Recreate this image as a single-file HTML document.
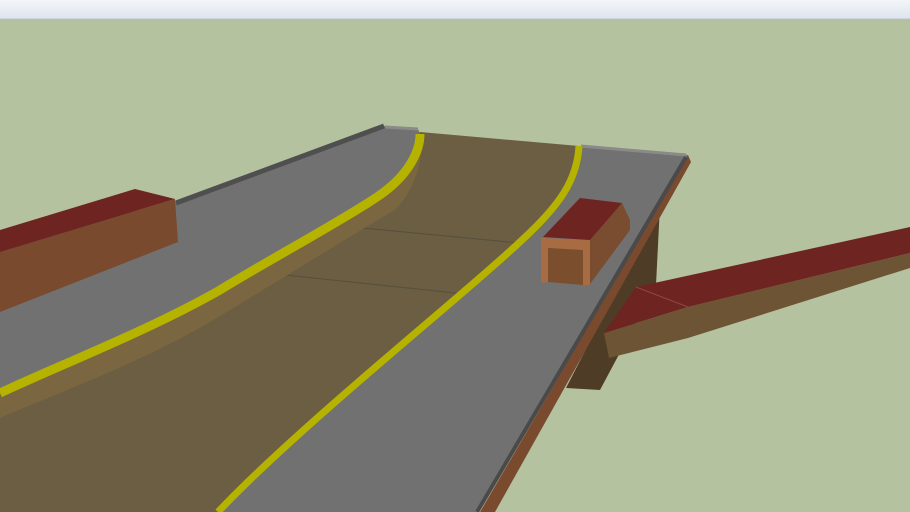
<!DOCTYPE html>
<html><head><meta charset="utf-8"><style>
html,body{margin:0;padding:0;width:910px;height:512px;overflow:hidden;background:#b5c2a0}
.top{position:absolute;left:0;top:0;width:910px;height:18px;background:linear-gradient(#f3f5f8,#dfe5ee);border-bottom:1px solid #cfd6df}
svg{position:absolute;left:0;top:0}
</style></head><body>
<div class="top"></div>
<svg width="910" height="512" viewBox="0 0 910 512">
<polygon points="660,205 656,285 600,390 566,388" fill="#4e3c26"/>
<polygon points="420,132 579,146 600,160 240,512 0,512 0,380" fill="#6b5e42"/>
<line x1="362" y1="228" x2="520" y2="243" stroke="#55503e" stroke-width="1"/>
<line x1="285" y1="275" x2="465" y2="294" stroke="#55503e" stroke-width="1"/>
<path d="M420,134 C420,150 410,175 377,197 C340,222 260,265 220,290 C150,330 60,365 0,389 L0,418 C60,392 150,360 230,310 C280,280 360,230 395,210 C410,195 422,170 422,140 Z" fill="#7a6640"/>
<path d="M384,126 L418,129 L420,134 C420,150 410,175 377,197 C340,222 260,265 220,290 C150,330 60,365 0,389 L0,240 L176,202 Z" fill="#717171"/>
<line x1="384" y1="126" x2="176" y2="203" stroke="#4f4f4f" stroke-width="5"/>
<line x1="385" y1="127" x2="418" y2="129" stroke="#8a8a88" stroke-width="3"/>
<path d="M420,134 C420,150 410,175 377,197 C340,222 260,265 220,290 C150,330 60,365 0,393" fill="none" stroke="#b5b300" stroke-width="9"/>
<path d="M579,146 L688,155 L476,512 L222,512 C300,425 470,290 522,240 C560,205 577,180 579,146 Z" fill="#717171"/>
<line x1="581" y1="146" x2="686" y2="155" stroke="#8a8a88" stroke-width="3"/>
<polygon points="688,155 691,162 495,512 480,512" fill="#7a4a2e"/>
<line x1="686" y1="157" x2="477" y2="512" stroke="#4a4a4a" stroke-width="4"/>
<path d="M579,146 C577,180 560,205 522,240 C470,290 300,425 218,512" fill="none" stroke="#b5b300" stroke-width="7"/>
<polygon points="604,333 688,307 910,253 910,268 688,338 609,358" fill="#6d5434"/>
<polygon points="604,333 636,287 910,227 910,253 688,307" fill="#6e2420"/>
<line x1="636" y1="287" x2="688" y2="307" stroke="#8a4a40" stroke-width="1"/>
<polygon points="590,240 622,203 630,220 630,230 590,284" fill="#7a4c30"/>
<polygon points="541,238 590,240 590,285 583,285 583,250 548,248 548,282 541,283" fill="#a86c42"/>
<polygon points="548,248 583,250 583,285 548,282" fill="#7b4e2e"/>
<polygon points="543,237 580,198 622,203 590,240" fill="#6e2420"/>
<polygon points="0,252 175,199 178,242 0,312" fill="#7a4a2e"/>
<polygon points="0,230 135,189 175,199 0,252" fill="#6e2420"/>
</svg>
</body></html>
